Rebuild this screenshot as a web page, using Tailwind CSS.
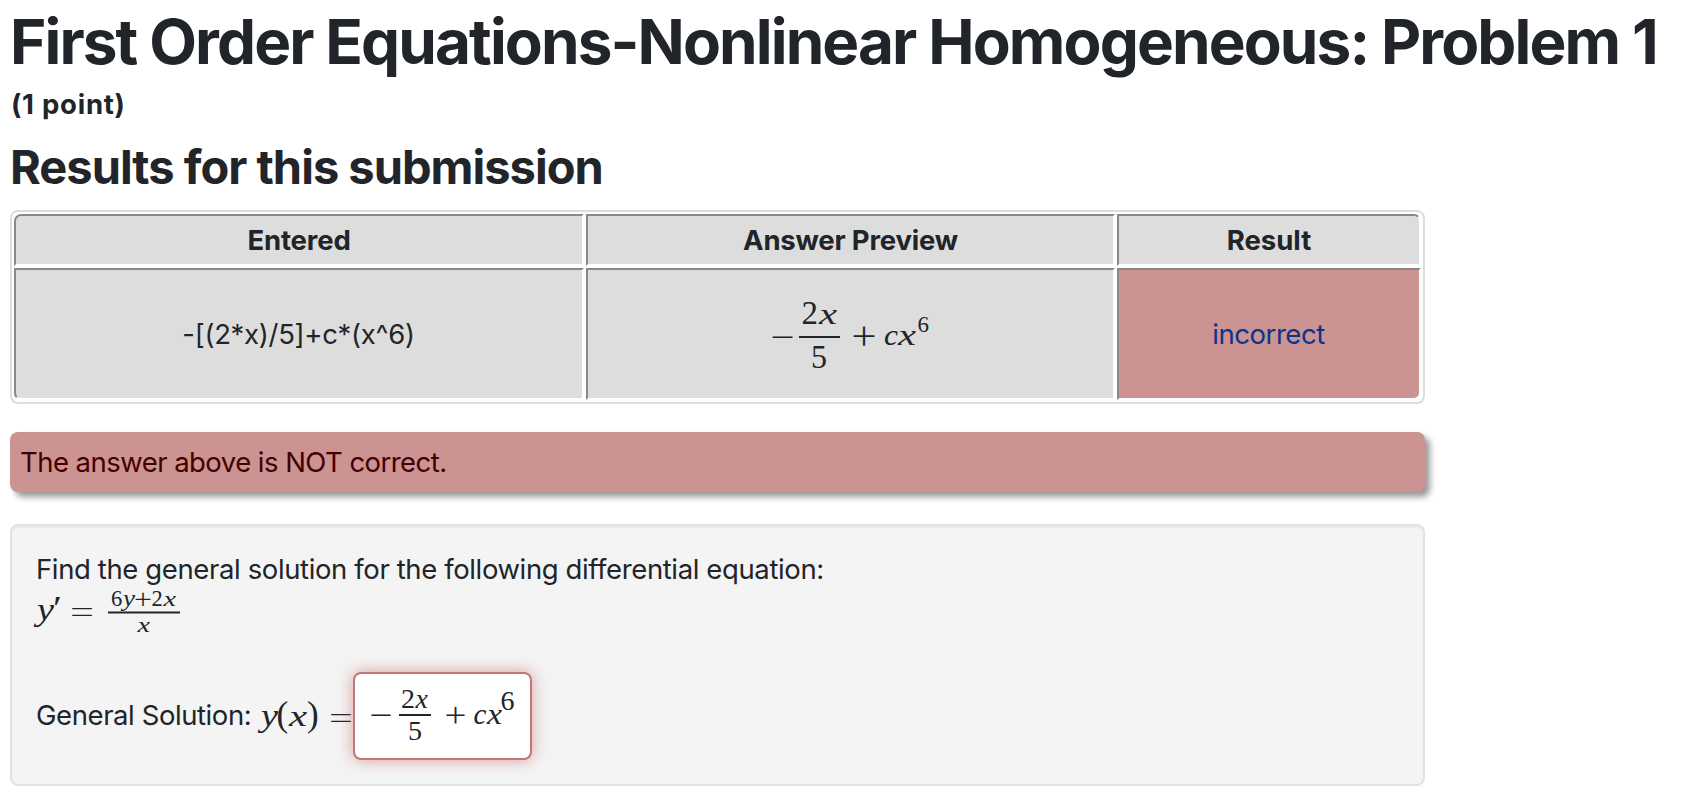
<!DOCTYPE html>
<html lang="en">
<head>
<meta charset="utf-8">
<title>First Order Equations-Nonlinear Homogeneous: Problem 1</title>
<script src="https://cdn.jsdelivr.net/npm/@tailwindcss/browser@4"></script>
</head>
<body class="bg-white font-['Inter',sans-serif] text-[#212529] text-[27.5px] leading-[42px] overflow-hidden">
<main class="pl-[10px] flex flex-col items-start">
  <h1 class="mt-[4px] h-[76px] leading-[76px] text-[62px] font-bold tracking-[-1.89px] whitespace-nowrap">First Order Equations-Nonlinear Homogeneous: Problem 1</h1>
  <div class="mt-[3px] h-[42px] pl-px font-bold tracking-[0.75px] whitespace-nowrap">(1 point)</div>
  <h2 class="mt-[13px] h-[58px] leading-[58px] text-[47px] font-bold tracking-[-0.99px] whitespace-nowrap">Results for this submission</h2>

  <div class="mt-[14px] w-[1415px] h-[194px] border-2 border-[#ddd] rounded-[8px] p-[2px] grid grid-cols-[570px_529px_304px] grid-rows-[52px_132px] gap-[2px] text-center">
    <div class="bg-[#ddd] border-2 border-t-[#888] border-l-[#888] border-r-white border-b-white rounded-tl-[7px] font-bold tracking-[-0.15px] flex items-center justify-center">Entered</div>
    <div class="bg-[#ddd] border-2 border-t-[#888] border-l-[#888] border-r-white border-b-white font-bold tracking-[-0.2px] flex items-center justify-center">Answer Preview</div>
    <div class="bg-[#ddd] border-2 border-t-[#888] border-l-[#888] border-r-white border-b-white rounded-tr-[7px] font-bold flex items-center justify-center">Result</div>
    <div class="bg-[#ddd] border-2 border-t-[#888] border-l-[#888] border-r-white border-b-white rounded-bl-[7px] tracking-[-0.3px] flex items-center justify-center pr-px">-[(2*x)/5]+c*(x^6)</div>
    <div class="bg-[#ddd] border-2 border-t-[#888] border-l-[#888] border-r-white border-b-white">
      <svg class="block overflow-visible w-[525px] h-[128px] font-['Liberation_Serif',serif]" viewBox="588 270 525 128" fill="#212529">
        <text class="font-['Inter',sans-serif] font-extralight" x="767.5" y="348" font-size="38" textLength="30" lengthAdjust="spacingAndGlyphs">−</text>
        <text x="801.5" y="323.5" font-size="33" textLength="16.5" lengthAdjust="spacingAndGlyphs">2</text>
        <text x="819" y="323.5" font-size="30" font-style="italic" textLength="18" lengthAdjust="spacingAndGlyphs">x</text>
        <rect x="799" y="336" width="41" height="2"/>
        <text x="811" y="368" font-size="33" textLength="16" lengthAdjust="spacingAndGlyphs">5</text>
        <text class="font-['Inter',sans-serif] font-extralight" x="848.5" y="349" font-size="44" textLength="31" lengthAdjust="spacingAndGlyphs">+</text>
        <text x="884" y="345" font-size="30" font-style="italic" textLength="14" lengthAdjust="spacingAndGlyphs">c</text>
        <text x="898" y="345" font-size="30" font-style="italic" textLength="18" lengthAdjust="spacingAndGlyphs">x</text>
        <text x="917.5" y="332" font-size="23">6</text>
      </svg>
    </div>
    <div class="bg-[#cb9391] border-2 border-t-[#888] border-l-[#888] border-r-white border-b-white rounded-br-[7px] flex items-center justify-center pr-px text-[#0e338c] tracking-[-0.45px]">incorrect</div>
  </div>

  <div class="mt-[28px] w-[1415px] h-[60px] rounded-[8px] bg-[#cb9391] shadow-[5px_5px_6px_#999] pl-[10px] flex items-center text-[#440000] tracking-[-0.54px] whitespace-nowrap">The answer above is NOT correct.</div>

  <section class="mt-[32px] w-[1415px] h-[262px] rounded-[8px] bg-[#f4f4f4] border-2 border-[#e2e2e2] shadow-[inset_0_2px_2px_rgba(0,0,0,0.05)] pl-[24px] pt-[22px] whitespace-nowrap">
    <p class="h-[43px] tracking-[-0.38px]">Find the general solution for the following differential equation:</p>
    <svg class="block overflow-visible w-[160px] h-[50px] font-['Liberation_Serif',serif]" viewBox="36 591 160 50" fill="#212529">
      <text x="37" y="620" font-size="32" font-style="italic" textLength="17" lengthAdjust="spacingAndGlyphs">y</text>
      <text x="53" y="619" font-size="34" textLength="9" lengthAdjust="spacingAndGlyphs">′</text>
      <text class="font-['Inter',sans-serif] font-extralight" x="65" y="620.5" font-size="32" textLength="34" lengthAdjust="spacingAndGlyphs">=</text>
      <text x="111" y="605.5" font-size="22.5">6</text>
      <text x="123" y="605.5" font-size="22.5" font-style="italic" textLength="12" lengthAdjust="spacingAndGlyphs">y</text>
      <text class="font-['Inter',sans-serif] font-extralight" x="132" y="608" font-size="31" textLength="22" lengthAdjust="spacingAndGlyphs">+</text>
      <text x="151.500" y="605.5" font-size="22.5">2</text>
      <text x="163.500" y="605.5" font-size="22" font-style="italic" textLength="12.5" lengthAdjust="spacingAndGlyphs">x</text>
      <rect x="108" y="611.500" width="72" height="2"/>
      <text x="137.500" y="632" font-size="22" font-style="italic" textLength="12.5" lengthAdjust="spacingAndGlyphs">x</text>
    </svg>
    <div class="mt-[31px] h-[88px] flex items-center">
      <span class="w-[222px] pb-[2px] tracking-[-0.42px]">General Solution:</span>
      <svg class="block overflow-visible shrink-0 w-[95px] h-[88px] font-['Liberation_Serif',serif]" viewBox="258 672 95 88" fill="#212529">
        <text x="261" y="726" font-size="32" font-style="italic" textLength="17" lengthAdjust="spacingAndGlyphs">y</text>
        <text x="276.500" y="726" font-size="35">(</text>
        <text x="289" y="726" font-size="30" font-style="italic" textLength="18" lengthAdjust="spacingAndGlyphs">x</text>
        <text x="307" y="726" font-size="35">)</text>
        <text class="font-['Inter',sans-serif] font-extralight" x="324" y="727" font-size="32" textLength="34" lengthAdjust="spacingAndGlyphs">=</text>
      </svg>
      <div class="relative shrink-0 w-[179px] h-[88px] rounded-[8px] border-2 border-[#c47676] bg-white shadow-[0_0_16px_rgba(196,100,100,0.6)]">
        <svg class="block overflow-visible w-[175px] h-[84px] font-['Liberation_Serif',serif]" viewBox="355 674 175 84" fill="#212529">
          <text class="font-['Inter',sans-serif] font-extralight" x="366.5" y="725.5" font-size="38" textLength="29" lengthAdjust="spacingAndGlyphs">−</text>
          <text x="401" y="708" font-size="28">2</text>
          <text x="415.500" y="708" font-size="28" font-style="italic">x</text>
          <rect x="399" y="714" width="32" height="2"/>
          <text x="408" y="740" font-size="28">5</text>
          <text class="font-['Inter',sans-serif] font-extralight" x="442" y="725.5" font-size="38" textLength="27" lengthAdjust="spacingAndGlyphs">+</text>
          <text x="473.500" y="724" font-size="29" font-style="italic">c</text>
          <text x="487" y="724" font-size="30" font-style="italic" textLength="15" lengthAdjust="spacingAndGlyphs">x</text>
          <text x="500.500" y="710" font-size="28">6</text>
        </svg>
      </div>
    </div>
  </section>
</main>
</body>
</html>
